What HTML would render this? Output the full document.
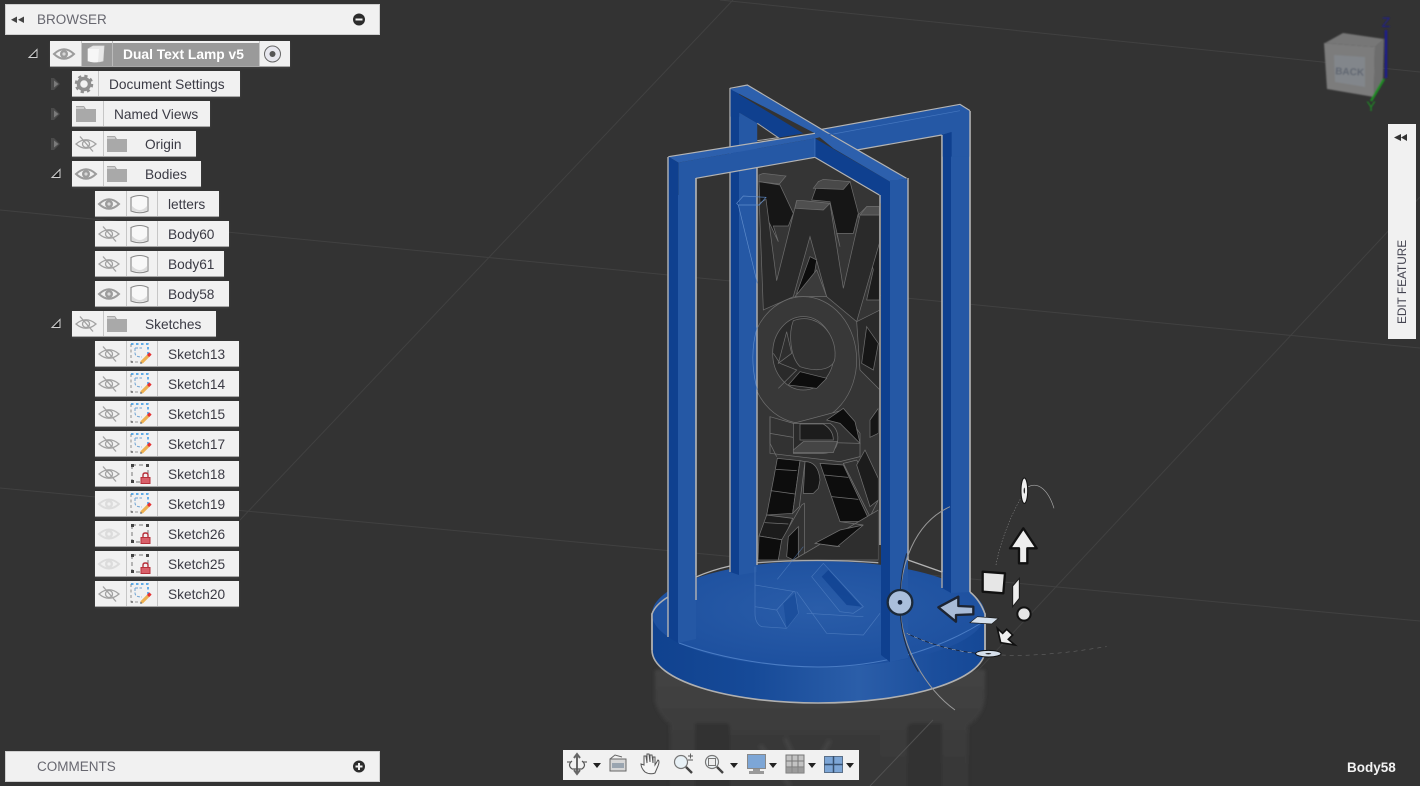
<!DOCTYPE html>
<html><head><meta charset="utf-8"><title>Dual Text Lamp</title>
<style>
html,body{margin:0;padding:0;background:#333}
#p{position:relative;width:1420px;height:786px;overflow:hidden;background:#333;font-family:"Liberation Sans",sans-serif;color:#3a3a44}
svg{position:absolute;left:0;top:0}
.h{position:absolute;left:5px;width:373px;height:29px;background:#f1f1f1;border:1px solid #cfcfcf;font-size:13.5px;line-height:29px;color:#67676f}
.h span{position:absolute;left:31px}
.r{position:absolute;height:25px;background:#f1f1f1;border-bottom:1px solid #a8a8a8;box-shadow:0 1px 2px rgba(255,255,255,.08)}
.r b{position:absolute;top:0;bottom:0;width:1px;background:#c6c6c6}
.r span{position:absolute;top:1px;line-height:26px;font-size:13.7px;white-space:nowrap}
#ef{position:absolute;left:1388px;top:124px;width:28px;height:215px;background:#f1f1f1}
#ef span{position:absolute;left:14px;top:200px;font-size:11.8px;color:#444450;white-space:nowrap;transform-origin:0 0;transform:rotate(-90deg) translateY(-7px)}
#nav{position:absolute;left:563px;top:750px;width:296px;height:30px;background:#f1f1f1}
#lb{position:absolute;left:1347px;top:760px;font-size:13.5px;font-weight:bold;color:#f2f2f2}
</style></head><body><div id="p">

<svg width="1420" height="786" viewBox="0 0 1420 786">
<defs>
<linearGradient id="side" x1="0" x2="1" y1="0" y2="0"><stop offset="0" stop-color="#10428f"/><stop offset=".3" stop-color="#164a98"/><stop offset=".62" stop-color="#2b5ea9"/><stop offset=".85" stop-color="#1b4e9c"/><stop offset="1" stop-color="#154896"/></linearGradient>
<radialGradient id="top" cx=".5" cy=".45" r=".6"><stop offset="0" stop-color="#2a5da9"/><stop offset="1" stop-color="#1c4f9e"/></radialGradient>
<linearGradient id="refl" x1="0" x2="0" y1="0" y2="1"><stop offset="0" stop-color="#444"/><stop offset=".5" stop-color="#3b3b3b"/><stop offset="1" stop-color="#373737"/></linearGradient>
<filter id="b3" x="-10%" y="-10%" width="120%" height="120%"><feGaussianBlur stdDeviation="1.5"/></filter>
<filter id="b1" x="-5%" y="-5%" width="110%" height="110%"><feGaussianBlur stdDeviation=".7"/></filter>
<filter id="b0" x="-2%" y="-2%" width="104%" height="104%"><feGaussianBlur stdDeviation=".35"/></filter>
</defs>
<g stroke="#414141" stroke-width="1" fill="none">
<path d="M0 210L1420 348M0 488L1420 621M720 0L1420 72M870 786L1420 197M733 0L240 520"/>
</g>
<!-- reflection -->
<g filter="url(#b3)">
<path d="M655 670L655 702Q660 718 670 724V800H968V726Q985 715 985 695V670Z" fill="url(#refl)"/>
<path d="M695 723H726Q730 723 730 730V800H695ZM907 730Q907 723 914 723H942V800H907Z" fill="#303030"/>
<path d="M730 735H880V800H730Z" fill="#393939"/>
<path d="M785 738L800 770M830 740L810 775M760 745L790 786" stroke="#424242" stroke-width="5" fill="none"/>
</g>
<path d="M933 720L870 786" stroke="#515151" stroke-width="1" fill="none"/>

<!-- base -->
<path d="M652 614V650C652 680 727 703 818 703S985 680 985 650V614Z" fill="url(#side)" stroke="#b0b0b0" stroke-width="1.6"/>
<ellipse cx="818.5" cy="614" rx="166.5" ry="53" fill="url(#top)"/>
<path d="M652 614V650M985 614V650M668 597Q655 605 652 614M970 592Q980 600 985 614" stroke="#b0b0b0" stroke-width="1.6" fill="none"/>
<path d="M679 643C725 660 780 667 818 667C870 667 930 655 983 622" stroke="#4a7cc4" stroke-width="1" fill="none"/>

<!-- rear posts -->
<g>
<path d="M730 88H739V575L730 572Z" fill="#0f408f"/>
<path d="M739 113L757 123V572L739 575Z" fill="#2558a5"/>
<path d="M942 135L951 132V593L942 588Z" fill="#0f408f"/>
<path d="M951 120L970 111V592L951 593Z" fill="#2558a5"/>
<path d="M970 111V592M942 135V588M730 88V572" stroke="#a8a8a8" stroke-width="1.4" fill="none"/>
</g>

<!-- window with letters -->
<g filter="url(#b0)">
<g transform="translate(640,70) scale(.33333)">
<path d="M352 290L525 262L718 375V1480Q540 1465 352 1480Z" fill="#343434"/>
<clipPath id="w"><path d="M352 290L525 262L718 375V1480Q540 1465 352 1480Z"/></clipPath>
<g clip-path="url(#w)" stroke="#6c6c6c" stroke-width="2.2">
<path d="M357 335L420 345L460 430L445 468H400L415 515L360 400Z" fill="#181818"/>
<path d="M357 315L370 310L438 318L418 342L357 335Z" fill="#4a4a4a"/>
<path d="M515 390L535 335H630L655 430L640 490H590L600 530L570 395Z" fill="#181818"/>
<path d="M520 355L535 335L550 328L630 335L610 358Z" fill="#4a4a4a"/>
<path d="M655 435L680 410H718V690H680L700 600Z" fill="#1a1a1a"/>
<path d="M358 400L378 388L410 632L470 392L570 400L610 655L660 435L718 435V520L650 755L560 680L510 500L460 680L370 720Z" fill="#2a2a2a"/>
<path d="M470 392L490 392L570 400L550 420L465 415ZM660 435L680 410H718V435Z" fill="#505050"/>
<path d="M470 670L510 560L530 570L515 660Z" fill="#0c0c0c"/>
<path d="M530 600L560 680L465 680Z" fill="#3a3a3a"/>
<path d="M650 755L720 720V960L660 900Z" fill="#2b2b2b"/>
<path d="M680 770L715 820L700 900L665 880Z" fill="#151515"/>
<ellipse cx="490" cy="870" rx="160" ry="190" fill="#373737"/>
<ellipse cx="490" cy="850" rx="92" ry="110" fill="#2a2a2a"/>
<path d="M460 752C530 725 590 790 585 860C585 895 540 910 480 890C450 860 445 790 460 752Z" fill="#333"/>
<path d="M415 880L440 785L455 850Z" fill="#2d2d2d"/>
<path d="M445 945L480 905L560 925L530 955Z" fill="#0d0d0d"/>
<path d="M400 850L420 880L470 900L415 955"  fill="none"/>
</g>
</g>
<g transform="translate(750,400) scale(.33333)" stroke="#707070" stroke-width="2.2">
<clipPath id="w2"><path d="M22 -60H385V490H22Z"/></clipPath>
<g clip-path="url(#w2)">
<path d="M60 50L130 70L280 30L330 100V170L270 185L60 160Z" fill="#303030"/>
<path d="M230 60L280 25L315 65L330 130L270 70Z" fill="#111"/>
<path d="M60 100L130 112M132 125L330 130M60 50V130L80 170" fill="none"/>
<path d="M130 70H240Q270 90 262 130Q255 160 220 160H130Z" fill="#2c2c2c"/>
<path d="M150 72H220Q250 90 250 120L150 120Z" fill="#1a1a1a"/>
<path d="M130 150L160 125H262L250 158H130Z" fill="#444"/>
<path d="M82 175L150 182L128 340L50 345L72 230Z" fill="#101010"/>
<path d="M78 208L140 212M62 272L135 282" fill="none"/>
<path d="M150 182L165 185L148 320L128 340Z" fill="#333"/>
<path d="M165 185Q205 185 210 240L205 265L190 280H160Z" fill="#141414"/>
<path d="M210 190L280 195L360 365L270 365Z" fill="#101010"/>
<path d="M222 225L295 232M245 290L325 298" fill="none"/>
<path d="M280 190L320 180L385 300L360 350Z" fill="#333"/>
<path d="M320 195L345 150L385 235V300L360 320Z" fill="#1d1d1d"/>
<path d="M360 60L385 25V100L360 112Z" fill="#181818"/>
<path d="M50 345L128 355L100 420L27 408Z" fill="#1d1d1d"/>
<path d="M27 408L100 420L85 480H24Z" fill="#111"/>
<path d="M44 368L115 372" fill="none"/>
<path d="M95 420L155 315L163 310V480H85Z" fill="#303030"/>
<path d="M110 470L115 410L145 380V470L130 480Z" fill="#0d0d0d"/>
<path d="M130 480L385 330V480Z" fill="#2d2d2d"/>
<path d="M195 430L270 390L340 375L262 440Z" fill="#0f0f0f"/>
<path d="M270 365L340 375M195 430L270 440" fill="none"/>
</g>
<path d="M22 488Q200 475 385 488" stroke="#aaa" stroke-width="4" fill="none"/>
</g>
</g>

<!-- blue overlays through the base (see-through letters) -->
<g transform="translate(640,380) scale(.33333)" fill="none" stroke="#5f8ccb" stroke-width="2" opacity=".6">
<path d="M345 560V700Q345 730 365 740L440 745L475 700L465 635L345 615M345 680L410 690L440 745M410 690L460 635"/>
<path d="M515 590L550 550L670 680L640 700L600 695ZM470 635L560 760L670 765L720 700M500 700L670 710"/>
<path d="M412 598L490 500"/>
</g>
<g transform="translate(640,380) scale(.33333)">
<path d="M545 590L565 570L665 680L620 675Z" fill="#0d3f8f" opacity=".7"/>
<path d="M430 670L465 640L475 700L440 745Z" fill="#174a99" opacity=".7"/>
</g>

<!-- frame arms and front posts (zoom coords) -->
<g transform="translate(640,70) scale(.33333)">
<!-- rear dark arm -->
<path d="M272 58L490 190L415 203L352 160L298 128L298 140L272 140Z" fill="#0f408f"/>
<path d="M298 128L352 160V215L298 222Z" fill="#2558a5"/>
<path d="M352 160L415 203L352 212Z" fill="#333"/>
<path d="M352 160L415 203L352 212" stroke="#a8a8a8" stroke-width="3" fill="none"/>
<!-- right arm -->
<path d="M525 190L545 178L960 103L990 122V260H935V186L905 195L650 240L580 195Z" fill="#2558a5"/>
<path d="M905 195L935 186V260H905Z" fill="#0f408f"/>
<path d="M580 192L960 122" stroke="#4577bf" stroke-width="2" fill="none"/>
<path d="M545 178L960 103L990 122M905 195L650 240" stroke="#b4b4b4" stroke-width="3.5" fill="none"/>
<!-- front-right arm -->
<path d="M525 205L750 335V400H720V375L525 262Z" fill="#0f408f"/>
<path d="M525 190L545 178L800 325L750 335L580 235Z" fill="#2d60ad"/>
<path d="M322 45L545 178L525 190L272 58Z" fill="#2d60ad"/>
<path d="M270 55L322 45L545 178M545 178L800 325" stroke="#b4b4b4" stroke-width="3.5" fill="none"/>
<path d="M750 335L800 325V400H750Z" fill="#2558a5"/>
<path d="M718 375L525 262" stroke="#b4b4b4" stroke-width="3.5" fill="none"/>
<!-- left arm -->
<path d="M115 278L525 205V262L168 325V400H115Z" fill="#2558a5"/>
<path d="M85 260L525 190L580 192L525 205L115 278Z" fill="#2d60ad"/>
<path d="M85 260L115 278V400H85Z" fill="#0f408f"/>
<path d="M85 260L525 190M168 325L525 262" stroke="#b4b4b4" stroke-width="3.5" fill="none"/>
<path d="M525 205V262" stroke="#4577bf" stroke-width="2" fill="none"/>
</g>
<g>
<path d="M668 195H678V643L668 637Z" fill="#0f408f"/>
<path d="M678 195H696V639L678 643Z" fill="#2558a5" />
<path d="M668 157V637M696 178V600" stroke="#b4b4b4" stroke-width="1.4" fill="none"/>
<path d="M881 195H890V662L881 655Z" fill="#0f408f"/>
<path d="M890 180H908V658L890 662Z" fill="#2558a5"/>
<path d="M908 178V560M880 195V545" stroke="#b4b4b4" stroke-width="1.4" fill="none"/>
<path d="M696 178V575M908 560Q925 566 942 572" stroke="#b4b4b4" stroke-width="1.4" fill="none"/>
<path d="M696 577Q712 570 730 566M757 565V167M942 572V135M970 111V592" stroke="#b4b4b4" stroke-width="1.4" fill="none"/>
</g>
<!-- letters through rear post -->
<g transform="translate(640,70) scale(.33333)" fill="none" stroke="#5f8ccb" stroke-width="2">
<path d="M290 400L310 378L378 382L358 405H295ZM295 405L352 640"/>
<path d="M352 770Q325 860 352 960"/>
</g>

<!-- gizmo -->
<g transform="translate(640,380) scale(.33333)">
<path d="M930 380C820 430 780 560 780 670C780 800 860 930 945 990" fill="none" stroke="#999" stroke-width="3"/>
<path d="M800 520C785 570 780 620 780 670C780 750 800 820 835 875" fill="none" stroke="#1f2b40" stroke-width="3"/>
<path d="M800 760Q900 808 1010 820" fill="none" stroke="#1a2438" stroke-width="2.500"/>
<path d="M800 760Q900 808 1010 820" fill="none" stroke="#c8d2e0" stroke-width="1.500" stroke-dasharray="12 12"/>
<path d="M1085 825C1200 830 1300 815 1400 800" fill="none" stroke="#6e6e6e" stroke-width="1.500" stroke-dasharray="12 12"/>
<path d="M1145 350C1110 410 1080 490 1068 555" fill="none" stroke="#999" stroke-width="1.500" stroke-dasharray="4 5"/>
<path d="M1165 320C1195 305 1225 330 1242 385" fill="none" stroke="#aaa" stroke-width="2"/>
<circle cx="780" cy="667" r="37" fill="#aabfdc" stroke="#1c2a3a" stroke-width="7"/>
<circle cx="780" cy="667" r="7" fill="#16243c"/>
<path d="M895 682L955 650V678L1000 680V703L948 705V725Z" fill="#a9bcd8" stroke="#1c2433" stroke-width="7" stroke-linejoin="round"/>
<path d="M990 728L1012 710L1075 715L1055 732Z" fill="#d5e0ec" stroke="#1a1a1a" stroke-width="2"/>
<path d="M1072 745L1088 760L1100 748L1118 765L1105 778L1125 795L1082 788Z" fill="#eee" stroke="#111" stroke-width="5"/>
<path d="M1150 445L1190 505H1162V550H1137V505H1110Z" fill="#eee" stroke="#111" stroke-width="7" stroke-linejoin="round"/>
<path d="M1028 575L1095 580L1090 640L1028 635Z" fill="#e6e6e6" stroke="#111" stroke-width="7" stroke-linejoin="round"/>
<path d="M1118 618L1138 595V655L1118 680Z" fill="#eee" stroke="#1a1a1a" stroke-width="3"/>
<circle cx="1152" cy="702" r="20" fill="#e4e4e4" stroke="#111" stroke-width="6"/>
<ellipse cx="1153" cy="332" rx="10" ry="38" fill="#eee" stroke="#111" stroke-width="3"/>
<ellipse cx="1153" cy="332" rx="2" ry="9" fill="#222"/>
<ellipse cx="1045" cy="821" rx="38" ry="10" fill="#d5dfeb" stroke="#111" stroke-width="3"/>
<ellipse cx="1045" cy="821" rx="9" ry="2" fill="#222"/>
</g>

<!-- view cube -->
<g filter="url(#b1)">
<path d="M1325 43L1343 33L1384 39L1375 47Z" fill="#777"/>
<path d="M1324 43L1375 47L1374 97L1327 89Z" fill="#7b7b7b"/>
<path d="M1375 47L1384 39L1383 78L1374 97Z" fill="#6d6d6d"/>
<path d="M1334 55L1365 57V87L1335 82Z" fill="#82868b"/>
<text x="1349.500" y="75" font-family="'Liberation Sans',sans-serif" font-size="10" font-weight="bold" fill="#5e6570" text-anchor="middle" transform="rotate(3 1350 75)">BACK</text>
<path d="M1386 30V78" stroke="#1d1d8c" stroke-width="2.500"/>
<path d="M1384 79L1371 101" stroke="#1d8a24" stroke-width="2.500"/>
<text x="1386" y="27" font-family="'Liberation Sans',sans-serif" font-size="14" fill="#1d1d8c" text-anchor="middle">Z</text>
<text x="1371" y="111" font-family="'Liberation Sans',sans-serif" font-size="14" fill="#1d8a24" text-anchor="middle">Y</text>
</g>
</svg>

<div class="h" style="top:4px"><span>BROWSER</span></div>
<div class="h" style="top:751px"><span>COMMENTS</span></div>

<div class="r" style="left:50px;top:41px;width:240px"><div style="position:absolute;left:31px;top:2px;width:178px;height:23px;background:#9a9a9a"></div><b style="left:31px"></b><b style="left:62px;background:#bbb"></b><b style="left:209px"></b><span style="left:73px;color:#fff;font-weight:bold;font-size:13.8px">Dual Text Lamp v5</span></div>
<div class="r" style="left:72px;top:71px;width:168px"><b style="left:26px"></b><span style="left:37px">Document Settings</span></div>
<div class="r" style="left:72px;top:101px;width:138px"><b style="left:31px"></b><span style="left:42px">Named Views</span></div>
<div class="r" style="left:72px;top:131px;width:124px"><b style="left:31px"></b><span style="left:73px">Origin</span></div>
<div class="r" style="left:72px;top:161px;width:129px"><b style="left:31px"></b><span style="left:73px">Bodies</span></div>
<div class="r" style="left:95px;top:191px;width:124px"><b style="left:31px"></b><b style="left:62px"></b><span style="left:73px">letters</span></div>
<div class="r" style="left:95px;top:221px;width:134px"><b style="left:31px"></b><b style="left:62px"></b><span style="left:73px">Body60</span></div>
<div class="r" style="left:95px;top:251px;width:129px"><b style="left:31px"></b><b style="left:62px"></b><span style="left:73px">Body61</span></div>
<div class="r" style="left:95px;top:281px;width:134px"><b style="left:31px"></b><b style="left:62px"></b><span style="left:73px">Body58</span></div>
<div class="r" style="left:72px;top:311px;width:144px"><b style="left:31px"></b><span style="left:73px">Sketches</span></div>
<div class="r" style="left:95px;top:341px;width:144px"><b style="left:31px"></b><b style="left:62px"></b><span style="left:73px">Sketch13</span></div>
<div class="r" style="left:95px;top:371px;width:144px"><b style="left:31px"></b><b style="left:62px"></b><span style="left:73px">Sketch14</span></div>
<div class="r" style="left:95px;top:401px;width:144px"><b style="left:31px"></b><b style="left:62px"></b><span style="left:73px">Sketch15</span></div>
<div class="r" style="left:95px;top:431px;width:144px"><b style="left:31px"></b><b style="left:62px"></b><span style="left:73px">Sketch17</span></div>
<div class="r" style="left:95px;top:461px;width:144px"><b style="left:31px"></b><b style="left:62px"></b><span style="left:73px">Sketch18</span></div>
<div class="r" style="left:95px;top:491px;width:144px"><b style="left:31px"></b><b style="left:62px"></b><span style="left:73px">Sketch19</span></div>
<div class="r" style="left:95px;top:521px;width:144px"><b style="left:31px"></b><b style="left:62px"></b><span style="left:73px">Sketch26</span></div>
<div class="r" style="left:95px;top:551px;width:144px"><b style="left:31px"></b><b style="left:62px"></b><span style="left:73px">Sketch25</span></div>
<div class="r" style="left:95px;top:581px;width:144px"><b style="left:31px"></b><b style="left:62px"></b><span style="left:73px">Sketch20</span></div>

<div id="ef"><span>EDIT FEATURE</span></div>
<div id="nav"></div>
<div id="lb">Body58</div>

<svg width="1420" height="786" viewBox="0 0 1420 786" style="pointer-events:none">
<defs>
<g id="eye"><path d="M5 13Q15 3.500 25 13Q15 22.500 5 13Z" fill="#f1f1f1" stroke="#9c9c9c" stroke-width="2"/><circle cx="15" cy="13" r="4" fill="#9c9c9c"/><circle cx="15" cy="13" r="1.600" fill="#d8d8d8"/></g>
<g id="off"><path d="M5 13Q15 4.500 25 13Q15 21.500 5 13Z" fill="none" stroke="#a2a2a2" stroke-width="1.300"/><circle cx="15" cy="13" r="3.500" fill="none" stroke="#a2a2a2" stroke-width="1.300"/><path d="M9 5.500L22 20.500" stroke="#a2a2a2" stroke-width="1.300"/></g>
<g id="dim"><path d="M5 13Q15 4 25 13Q15 22 5 13Z" fill="#f1f1f1" stroke="#dcdcdc" stroke-width="2"/><circle cx="15" cy="13" r="4" fill="#dcdcdc"/><circle cx="15" cy="13" r="1.600" fill="#f1f1f1"/></g>
<g id="fol"><path d="M5 5H13L15 8H25V21H5Z" fill="#a9a9a9"/><path d="M5 7H13" stroke="#f1f1f1" stroke-width="1"/></g>
<g id="cyl"><path d="M6 6.500Q15 2.500 23 6.500V20Q15 23.500 6 20Z" fill="#f8f8f8" stroke="#888" stroke-width="1.100"/><path d="M7 15Q15 23 22 15V19.500Q15 22.500 7 19.500Z" fill="#dcdcdc"/></g>
<g id="sk"><path d="M6 3V21H20" fill="none" stroke="#999" stroke-width="1.100" stroke-dasharray="3 2.500"/><path d="M6 3H23V13" fill="none" stroke="#2f95e6" stroke-width="1.400" stroke-dasharray="2.500 2.500"/><path d="M10 7V12Q10 16 17 16M10 7H17" fill="none" stroke="#6fa4d4" stroke-width="1" stroke-dasharray="3 1.500"/><path d="M6 21h2" stroke="#666" stroke-width="1.500"/><path d="M16.500 21.500L23 15" stroke="#edb050" stroke-width="3.200"/><path d="M23 15L25.500 12.500" stroke="#e63030" stroke-width="3.200"/><path d="M16.500 21.500L15.500 22.500" stroke="#555" stroke-width="1.500"/></g>
<g id="lk"><path d="M7 4H23V15M15 21H7V4" fill="none" stroke="#777" stroke-width="1" stroke-dasharray="4 3"/><path d="M6 3h3v3H6zM21 3h3v3h-3zM6 19h3v3H6z" fill="#444"/><path d="M18 16V14Q18 12 20.500 12Q23 12 23 14V16" fill="none" stroke="#b8323c" stroke-width="1.400"/><rect x="16" y="16.500" width="9" height="6" fill="#d9606a" stroke="#b8323c" stroke-width="1"/></g>
<g id="tr"><path d="M2 9.500L10 1.500V9.500Z" fill="#1c1c1c" stroke="#d0d0d0" stroke-width="1"/></g>
<g id="tc"><path d="M0 0H3L9 6L3 12H0Z" fill="#4a4a4a"/><path d="M3 2.500V9.500L7.500 6Z" fill="#7a7a7a"/></g>
<g id="dd"><path d="M0 0H8L4 5Z" fill="#222"/></g>
</defs>

<!-- header icons -->
<path d="M17 16.500V23L11 19.700ZM24 16.500V23L18 19.700Z" fill="#444"/>
<circle cx="359" cy="19.500" r="6" fill="#2c2c2c"/><rect x="355.500" y="18.500" width="7" height="2" fill="#f1f1f1"/>
<circle cx="359" cy="766.500" r="6" fill="#2c2c2c"/><path d="M355.500 765.500h7v2h-7zM358 763h2v7h-2z" fill="#f1f1f1"/>
<path d="M1401 134V141L1394 137.500ZM1407 134V141L1401 137.500Z" fill="#333"/>

<!-- tree arrows -->
<use href="#tr" x="27" y="48"/>
<use href="#tc" x="51" y="78"/><use href="#tc" x="51" y="108"/><use href="#tc" x="51" y="138"/>
<use href="#tr" x="50" y="168"/><use href="#tr" x="50" y="318"/>

<!-- root icons -->
<use href="#eye" x="49" y="41"/>
<path d="M88 49L93 46H104L103 61Q97 63 88 61Z" fill="#e8e8e8" stroke="#dfdfdf" stroke-width=".8"/><path d="M88 49H99L98 62Q92 63 88 61Z" fill="#f6f6f6"/>
<circle cx="272.500" cy="54" r="8" fill="#e7e7ee" stroke="#666" stroke-width="1"/><circle cx="272.500" cy="54" r="3" fill="#555"/>

<!-- gear -->
<circle cx="84" cy="84" r="5.500" fill="none" stroke="#8f8f8f" stroke-width="3.500"/><circle cx="84" cy="84" r="8" fill="none" stroke="#8f8f8f" stroke-width="2.500" stroke-dasharray="3.200 3.100"/>

<use href="#fol" x="71" y="101"/>
<use href="#off" x="71" y="131"/><use href="#fol" x="102" y="131"/>
<use href="#eye" x="71" y="161"/><use href="#fol" x="102" y="161"/>
<use href="#eye" x="94" y="191"/><use href="#cyl" x="125" y="191"/>
<use href="#off" x="94" y="221"/><use href="#cyl" x="125" y="221"/>
<use href="#off" x="94" y="251"/><use href="#cyl" x="125" y="251"/>
<use href="#eye" x="94" y="281"/><use href="#cyl" x="125" y="281"/>
<use href="#off" x="71" y="311"/><use href="#fol" x="102" y="311"/>
<use href="#off" x="94" y="341"/><use href="#sk" x="125" y="341"/>
<use href="#off" x="94" y="371"/><use href="#sk" x="125" y="371"/>
<use href="#off" x="94" y="401"/><use href="#sk" x="125" y="401"/>
<use href="#off" x="94" y="431"/><use href="#sk" x="125" y="431"/>
<use href="#off" x="94" y="461"/><use href="#lk" x="125" y="461"/>
<use href="#dim" x="94" y="491"/><use href="#sk" x="125" y="491"/>
<use href="#dim" x="94" y="521"/><use href="#lk" x="125" y="521"/>
<use href="#dim" x="94" y="551"/><use href="#lk" x="125" y="551"/>
<use href="#off" x="94" y="581"/><use href="#sk" x="125" y="581"/>

<!-- nav toolbar -->
<g fill="none" stroke="#666" stroke-width="1.200">
<path d="M577 755V773M574 758L577 754L580 758M574 770L577 774L580 770" stroke-width="2"/>
<path d="M571 762H567M583 762H587"/>
<path d="M572 761Q567 765 572 769M582 761Q587 765 582 769M572 769H582" stroke="#555"/>
</g>
<use href="#dd" x="593" y="763"/>
<path d="M610 759H626V771H610Z" fill="#d7d7d7" stroke="#666"/><path d="M612 763H624V768H612Z" fill="#9aa5b0"/><path d="M610 759L615 755L622 757" fill="none" stroke="#666"/>
<path d="M645 772Q641 768 641 764L644 765L644 756H646L647 763V754H649L650 762V755H652L653 763V757H655V765L658 760Q660 761 658 766L655 773Q650 775 645 772Z" fill="#f6f6f6" stroke="#555" stroke-width="1"/>
<circle cx="681" cy="762" r="6.500" fill="#e8f1f6" stroke="#777" stroke-width="1.200"/><path d="M686 767L692 773" stroke="#444" stroke-width="2.400"/><path d="M688 756h5M690.500 753.500v5M688 760h5" stroke="#555" stroke-width=".9"/>
<circle cx="712" cy="762" r="6.500" fill="#eef3f5" stroke="#777" stroke-width="1.200"/><rect x="708.500" y="758.500" width="7" height="7" fill="#eee" stroke="#777"/><path d="M717 767L723 773" stroke="#444" stroke-width="2.400"/>
<use href="#dd" x="730" y="763"/>
<rect x="747.500" y="754.500" width="18" height="14" fill="#7da6d6" stroke="#888"/><path d="M753 769H760V771H753ZM749 771H764V774H749Z" fill="#999"/>
<use href="#dd" x="769" y="763"/>
<rect x="786" y="755" width="18" height="18" fill="#c3c3c3" stroke="#777"/><path d="M792 755V773M798 755V773M786 761H804M786 767H804" stroke="#777"/><rect x="786" y="767" width="18" height="6" fill="#8a8a8a" opacity=".7"/>
<use href="#dd" x="808" y="763"/>
<rect x="824.500" y="756.500" width="18" height="16" fill="#7da6d6" stroke="#5a6f88"/><path d="M833.500 756V773M824 764.500H843" stroke="#37506e" stroke-width="1.500"/>
<use href="#dd" x="846" y="763"/>
</svg>
</div></body></html>
